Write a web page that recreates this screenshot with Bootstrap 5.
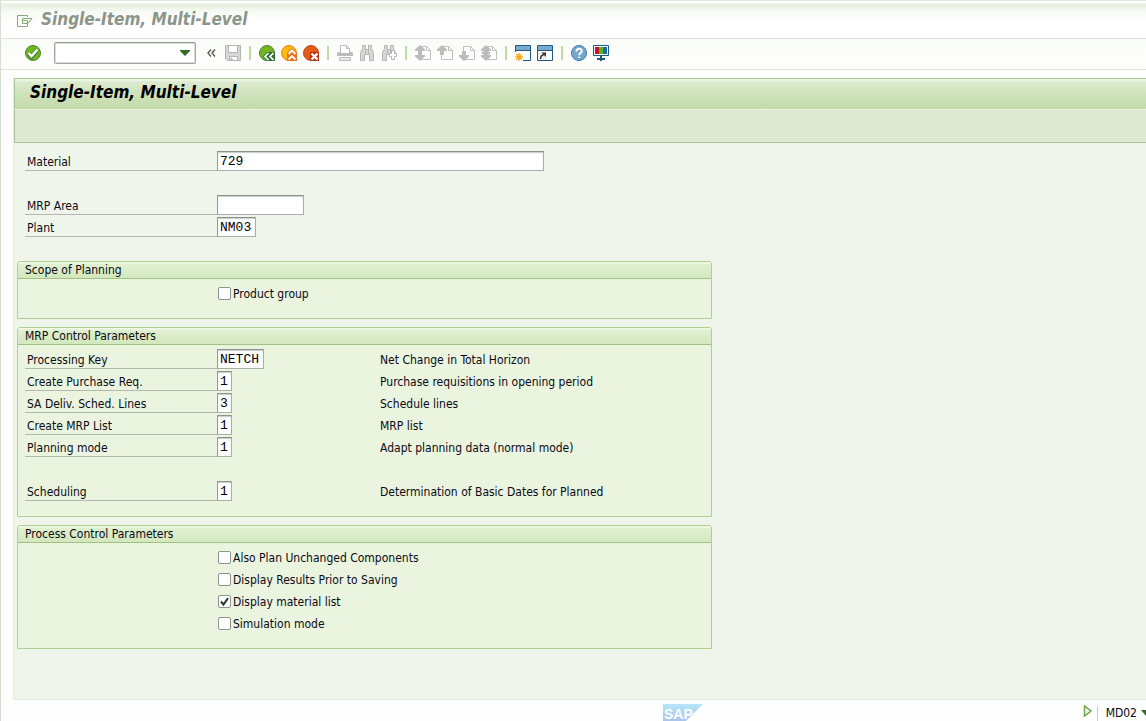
<!DOCTYPE html>
<html lang="en">
<head>
<meta charset="utf-8">
<meta name="viewport" content="width=device-width, initial-scale=1">
<title>Single-Item, Multi-Level</title>
<link href="https://cdn.jsdelivr.net/npm/bootstrap@5.3.0/dist/css/bootstrap.min.css" rel="stylesheet">
<style>
body{font-family:"DejaVu Sans Condensed","DejaVu Sans",sans-serif;font-size:12px;line-height:16px;color:#0a0a14;background:#fdfefd;border-left:1px solid #d5dfcf;border-top:1px solid #dfe8d9}
svg{display:block}
.title-strip{height:38px;padding:0 12px 2px;border-bottom:1px solid #dde3d8;background:linear-gradient(#fff 0 2px,#e6f0df 3px,#eaf3e5 6px,#f6faf4 10px,#fff 22px)}
.heading-text{font-size:17px;line-height:20px;font-weight:700;font-style:italic;margin:0}
.title-strip .heading-text{color:#8c9589}
.toolstrip{height:31px;padding:0 0 2px 21px;border-bottom:1px solid #dfe3dc;background:linear-gradient(#fafcf9,#fff)}
.tool{width:22px;height:22px;padding:0;border:0;background:none;display:flex;align-items:center;justify-content:center}
.sep{width:2px;height:14px;margin:0 5px;background:#bcdba5}
.command{width:142px;height:22px;margin:0 4px 0 10px;padding:0 20px 0 4px;font-size:12px;border:1px solid #a0a69d;border-top-color:#8a9c87;border-radius:2px;box-shadow:inset 0 0 0 1px #dbe0d8;appearance:none;background:#fff url("data:image/svg+xml,%3Csvg xmlns='http://www.w3.org/2000/svg' width='10' height='6'%3E%3Cpath d='M0 0h10v1L5 6 0 1z' fill='%23346b24'/%3E%3C/svg%3E") no-repeat right 5px center}
.workspace{margin:8px 0 0 12px;background:#f0f5eb;border-left:1px solid #e8f0e3;border-bottom:1px solid #e3ebe0}
.screen-title{height:31px;padding:3px 0 0 15px;border:1px solid #a8c490;border-width:1px 0 0 1px;background:linear-gradient(#eef6e7 0 1px,#dcebcf 3px,#cfe2bd 14px,#c4dba9)}
.screen-title .heading-text{color:#000}
.screen-tools{height:34px;border:solid #a9c094;border-width:0 0 1px 1px;border-top:1px solid #edf5e5;background:#dfe8d0}
.form-area{padding:8px 0 50px 3px}
.frow{display:grid;grid-template-columns:192px 163px 1fr;height:22px;align-items:start}
.gap-below{margin-bottom:22px}
.frow span,.frow label{line-height:22px;white-space:nowrap}
.frow label{height:20px;padding-left:2px;border-bottom:1px solid #b3b9ae}
.field{height:20px;padding:1px 0 0 2px;border:1px solid #a9aea8;border-top-color:#8c938b;border-left-color:#959c94;border-radius:0;box-shadow:inset 0 1px 1px #c8ccc6;background:#fff;font-family:"Liberation Mono",monospace;font-size:13px;line-height:16px;color:#000}
.w-code{width:15px}.w-plant{width:39px}.w-key{width:47px}.w-area{width:87px}.w-material{width:327px}
.top-fields{padding-left:8px}
.group{max-width:695px;margin:0 0 8px;border:1px solid #b0d093;border-radius:3px 3px 0 0;background:#eaf4df}
.group legend{height:17px;margin:0;padding-left:7px;font-size:12px;line-height:16px;border-bottom:1px solid #a0c382;background:linear-gradient(#f0f8e8 0 1px,#e0f0d0 2px,#d3e8be);border-radius:2px 2px 0 0}
.group-body{padding:4px 0 13px 7px}
.checks{padding:4px 0 13px 200px}
.tick{display:flex;align-items:center;height:22px;gap:2px}
.tick input{appearance:none;width:13px;height:13px;margin:0 0 1px;border:1px solid #8e938d;border-radius:2px;background:#fff;flex:none}
.tick input:checked{background:#fff url("data:image/svg+xml,%3Csvg xmlns='http://www.w3.org/2000/svg' width='11' height='11'%3E%3Cpath d='M2 5.5l2.5 3L9 2.2' fill='none' stroke='%23253c25' stroke-width='2'/%3E%3C/svg%3E") center no-repeat}
.statusbar{display:grid;grid-template-columns:1fr auto 1fr}
.brand{margin:4px 0 0 218px}
.status-sep{width:1px;height:15px;background:#c5c9c3}
</style>
</head>
<body class="d-flex flex-column min-vh-100">
<header>
  <div class="title-strip d-flex align-items-center">
    <svg class="ms-1 mt-1" width="16" height="12" viewBox="0 0 16 12" fill="none" stroke="#84aa76"><path d="M10.500 2V.5H.5v11h10V9M5.500 3.500h9.500l-4 5H5.500zM5.500 5.500h5v3"/></svg>
    <p class="heading-text ms-2">Single-Item, Multi-Level</p>
  </div>
  <nav class="toolstrip d-flex align-items-center" aria-label="Standard toolbar">
    <button class="tool" aria-label="Enter"><svg width="16" height="16" viewBox="0 0 16 16"><circle cx="8" cy="8" r="7.500" fill="#72b51d" stroke="#46823d"/><path d="M3.500 8.500l3 3.200 6-7" stroke="#397530" stroke-width="4" fill="none"/><path d="M3.500 8l3 3.200 6-6.700" stroke="#fff" stroke-width="2.500" fill="none"/></svg></button>
    <select class="command" aria-label="Command"><option></option></select>
    <button class="tool" aria-label="Collapse"><svg width="9" height="8" viewBox="0 0 9 8" fill="none" stroke="#555" stroke-width="1.400"><path d="M4 .5L1 4l3 3.500M8 .5L5 4l3 3.500"/></svg></button>
    <button class="tool" aria-label="Save"><svg width="16" height="16" viewBox="0 0 16 16" fill="#d7d7d7" stroke="#b4b4b4"><path d="M.5.5h15v15h-13l-2-2z"/><path d="M3.500.5h9v7h-9z" fill="#fff"/><path d="M4.500 15.500v-4h8v4z" fill="#fff"/><path d="M6.500 13v2.500" stroke-width="2"/></svg></button>
    <i class="sep"></i>
    <button class="tool" aria-label="Back"><svg width="16" height="16" viewBox="0 0 16 16"><circle cx="8" cy="8" r="7.500" fill="#72b51d" stroke="#46823d"/><path d="M8 7h8v9H8l-4-4.500z" fill="#2f7337"/><path d="M9.500 8L6 11.500 9.500 15M14.500 8L11 11.500l3.500 3.500" stroke="#fff" stroke-width="1.700" fill="none"/></svg></button>
    <button class="tool" aria-label="Exit"><svg width="16" height="16" viewBox="0 0 16 16"><circle cx="8" cy="8" r="7.500" fill="#fdbb12" stroke="#ef7d16"/><path d="M6 8l5-5 5 5v8H6z" fill="#eb7119"/><path d="M7.500 9L11 5.500 14.500 9M7.500 14.500L11 11l3.500 3.500" stroke="#fff" stroke-width="1.800" fill="none"/></svg></button>
    <button class="tool" aria-label="Cancel"><svg width="16" height="16" viewBox="0 0 16 16"><circle cx="8" cy="8" r="7.500" fill="#e25a16" stroke="#c34a19"/><path d="M7 7h9v9H7z" fill="#b83213"/><path d="M8.500 8.500l6 6M14.500 8.500l-6 6" stroke="#fff" stroke-width="2.400"/></svg></button>
    <i class="sep"></i>
    <button class="tool" aria-label="Print"><svg width="16" height="16" viewBox="0 0 16 16"><path d="M3.500 8V.5h6l3 3V8" fill="#fff" stroke="#bcbcbc"/><path d="M9.500.5v3h3" fill="none" stroke="#bcbcbc"/><path d="M0 8l1-1h2v1h10V7h2l1 1v3H0z" fill="#bcbcbc"/><path d="M2.500 12.500h11v3h-11z" fill="#e8e8e8" stroke="#bcbcbc"/></svg></button>
    <button class="tool" aria-label="Find"><svg width="16" height="16" viewBox="0 0 16 16" fill="#d6d6d6" stroke="#b7b7b7"><path d="M3.500.5h3v4h3v-4h3v3l2 4v8h-4v-6h-5v6h-4v-8l2-4zM6.500 4.500v5M9.500 4.500v5"/></svg></button>
    <button class="tool" aria-label="Find next"><svg width="16" height="16" viewBox="0 0 16 16" fill="#d6d6d6" stroke="#b7b7b7"><path d="M3.500.5h3v4h3v-4h3v3l2 4v3h-4v-1h-5v6h-4v-8l2-4zM6.500 4.500v5M9.500 4.500v5"/><path d="M10.500 5.500h3v3h2v3h-2v3h-3v-3h-2v-3h2z" fill="#fff"/></svg></button>
    <i class="sep"></i>
    <button class="tool" aria-label="First page"><svg width="16" height="16" viewBox="0 0 16 16"><path d="M6.500 1.500h5l4 4v9h-9z" fill="#fff" stroke="#c0c0c0"/><path d="M11.500 1.500v4h4" fill="none" stroke="#c0c0c0"/><path d="M5 0l5 4.500V6H7v4h3v1.500L5 16l-5-4.500V10h3V6H0V4.500z" fill="#bcbcbc"/></svg></button>
    <button class="tool" aria-label="Previous page"><svg width="16" height="16" viewBox="0 0 16 16"><path d="M4.500 1.500h7l4 4v9h-11z" fill="#fff" stroke="#c0c0c0"/><path d="M11.500 1.500v4h4" fill="none" stroke="#c0c0c0"/><path d="M5 0l5 4.500V6H7v4H3V6H0V4.500z" fill="#bcbcbc"/></svg></button>
    <button class="tool" aria-label="Next page"><svg width="16" height="16" viewBox="0 0 16 16"><path d="M4.500 1.500h7l4 4v9h-11z" fill="#fff" stroke="#c0c0c0"/><path d="M11.500 1.500v4h4" fill="none" stroke="#c0c0c0"/><path d="M3 6h4v4h3v1.500L5 16l-5-4.500V10h3z" fill="#bcbcbc"/></svg></button>
    <button class="tool" aria-label="Last page"><svg width="16" height="16" viewBox="0 0 16 16"><path d="M4.500 1.500h7l4 4v9h-11z" fill="#fff" stroke="#c0c0c0"/><path d="M11.500 1.500v4h4" fill="none" stroke="#c0c0c0"/><path d="M5 0l5 4.500V6H7l3 2-3 2h3v1.500L5 16l-5-4.500V10h3L0 8l3-2H0V4.500z" fill="#bcbcbc"/></svg></button>
    <i class="sep"></i>
    <button class="tool" aria-label="New session"><svg width="16" height="16" viewBox="0 0 16 16"><path d="M.5.5h15v15H.5z" fill="#fff" stroke="#1e5b85"/><path d="M1 1h14v4H1z" fill="#79a9d0"/><path d="M0 5h16v1H0z" fill="#1e5b85"/><path d="M0 7h8v9H0z" fill="#fff"/><path d="M4 8v8M0 12h8M1 9l6 6M7 9l-6 6" stroke="#f09a12"/><circle cx="4" cy="12" r="2.700" fill="#ffad13"/></svg></button>
    <button class="tool" aria-label="Create shortcut"><svg width="16" height="16" viewBox="0 0 16 16"><path d="M.5.5h15v15H.5z" fill="#fff" stroke="#1e5b85"/><path d="M1 1h14v4H1z" fill="#79a9d0"/><path d="M0 5h16v1H0z" fill="#1e5b85"/><path d="M1 7h8v8H1z" fill="#eee"/><path d="M3.500 14c0-3 1-4 3.500-4.500" fill="none" stroke="#333" stroke-width="1.500"/><path d="M4.500 7.500H9V12z" fill="#333"/></svg></button>
    <i class="sep"></i>
    <button class="tool" aria-label="Help"><svg width="16" height="16" viewBox="0 0 16 16"><circle cx="8" cy="8" r="7.500" fill="#78a7cc" stroke="#3979a6"/><path d="M5.500 6.500C5.500 3 10.800 3 10.800 6c0 2-2.600 2-2.600 4.200M8.200 11.500V13" fill="none" stroke="#fff" stroke-width="2"/></svg></button>
    <button class="tool" aria-label="Customize layout"><svg width="16" height="16" viewBox="0 0 16 16"><path d="M.5.5h15v10H.5z" fill="#fff" stroke="#1e5b85"/><path d="M2 2h4v7H2z" fill="#c8102e"/><path d="M6 2h4v7H6z" fill="#58b51d"/><path d="M10 2h4v7h-4z" fill="#176bb2"/><path d="M7 11h2v2h3v2H9v1H7v-1H4v-2h3z" fill="#1e5b85"/></svg></button>
  </nav>
</header>
<main class="workspace flex-grow-1">
  <div class="screen-title"><h1 class="heading-text">Single-Item, Multi-Level</h1></div>
  <div class="screen-tools"></div>
  <form class="form-area">
    <div class="top-fields">
      <div class="frow gap-below"><label for="material">Material</label><input id="material" class="field w-material" value="729"></div>
      <div class="frow"><label for="area">MRP Area</label><input id="area" class="field w-area"></div>
      <div class="frow gap-below"><label for="plant">Plant</label><input id="plant" class="field w-plant" value="NM03"></div>
    </div>
    <fieldset class="group">
      <legend>Scope of Planning</legend>
      <div class="checks">
        <label class="tick"><input type="checkbox">Product group</label>
      </div>
    </fieldset>
    <fieldset class="group">
      <legend>MRP Control Parameters</legend>
      <div class="group-body">
        <div class="frow"><label for="key">Processing Key</label><input id="key" class="field w-key" value="NETCH"><span>Net Change in Total Horizon</span></div>
        <div class="frow"><label for="req">Create Purchase Req.</label><input id="req" class="field w-code" value="1"><span>Purchase requisitions in opening period</span></div>
        <div class="frow"><label for="lines">SA Deliv. Sched. Lines</label><input id="lines" class="field w-code" value="3"><span>Schedule lines</span></div>
        <div class="frow"><label for="list">Create MRP List</label><input id="list" class="field w-code" value="1"><span>MRP list</span></div>
        <div class="frow gap-below"><label for="mode">Planning mode</label><input id="mode" class="field w-code" value="1"><span>Adapt planning data (normal mode)</span></div>
        <div class="frow"><label for="sched">Scheduling</label><input id="sched" class="field w-code" value="1"><span>Determination of Basic Dates for Planned</span></div>
      </div>
    </fieldset>
    <fieldset class="group mb-0">
      <legend>Process Control Parameters</legend>
      <div class="checks">
        <label class="tick"><input type="checkbox">Also Plan Unchanged Components</label>
        <label class="tick"><input type="checkbox">Display Results Prior to Saving</label>
        <label class="tick"><input type="checkbox" checked>Display material list</label>
        <label class="tick"><input type="checkbox">Simulation mode</label>
      </div>
    </fieldset>
  </form>
</main>
<footer class="statusbar">
  <div></div>
  <svg class="brand" width="40" height="17" viewBox="0 0 40 17" role="img" aria-label="SAP"><defs><linearGradient id="sky" x2="0" y2="1"><stop stop-color="#b5e6fa"/><stop offset="1" stop-color="#a9c5ea"/></linearGradient></defs><path d="M0 0h40L23 17H0z" fill="url(#sky)"/><text x="1" y="15" font-family="Liberation Sans, sans-serif" font-weight="700" font-size="14" fill="#fff">SAP</text></svg>
  <div class="d-flex justify-content-end align-items-end">
    <svg class="mb-1" width="10" height="12" viewBox="0 0 10 12"><path d="M1.500 1v10L8 6z" fill="#eef7e4" stroke="#73a550" stroke-width="1.500"/></svg>
    <div class="status-sep mx-1"></div>
    <span class="ms-1 text-nowrap">MD02</span>
    <svg class="ms-1 mb-1" width="5" height="8" viewBox="0 0 5 8"><path d="M0 1h5v6z" fill="#346b24"/></svg>
  </div>
</footer>
<script src="https://cdn.jsdelivr.net/npm/bootstrap@5.3.0/dist/js/bootstrap.bundle.min.js"></script>
</body>
</html>
